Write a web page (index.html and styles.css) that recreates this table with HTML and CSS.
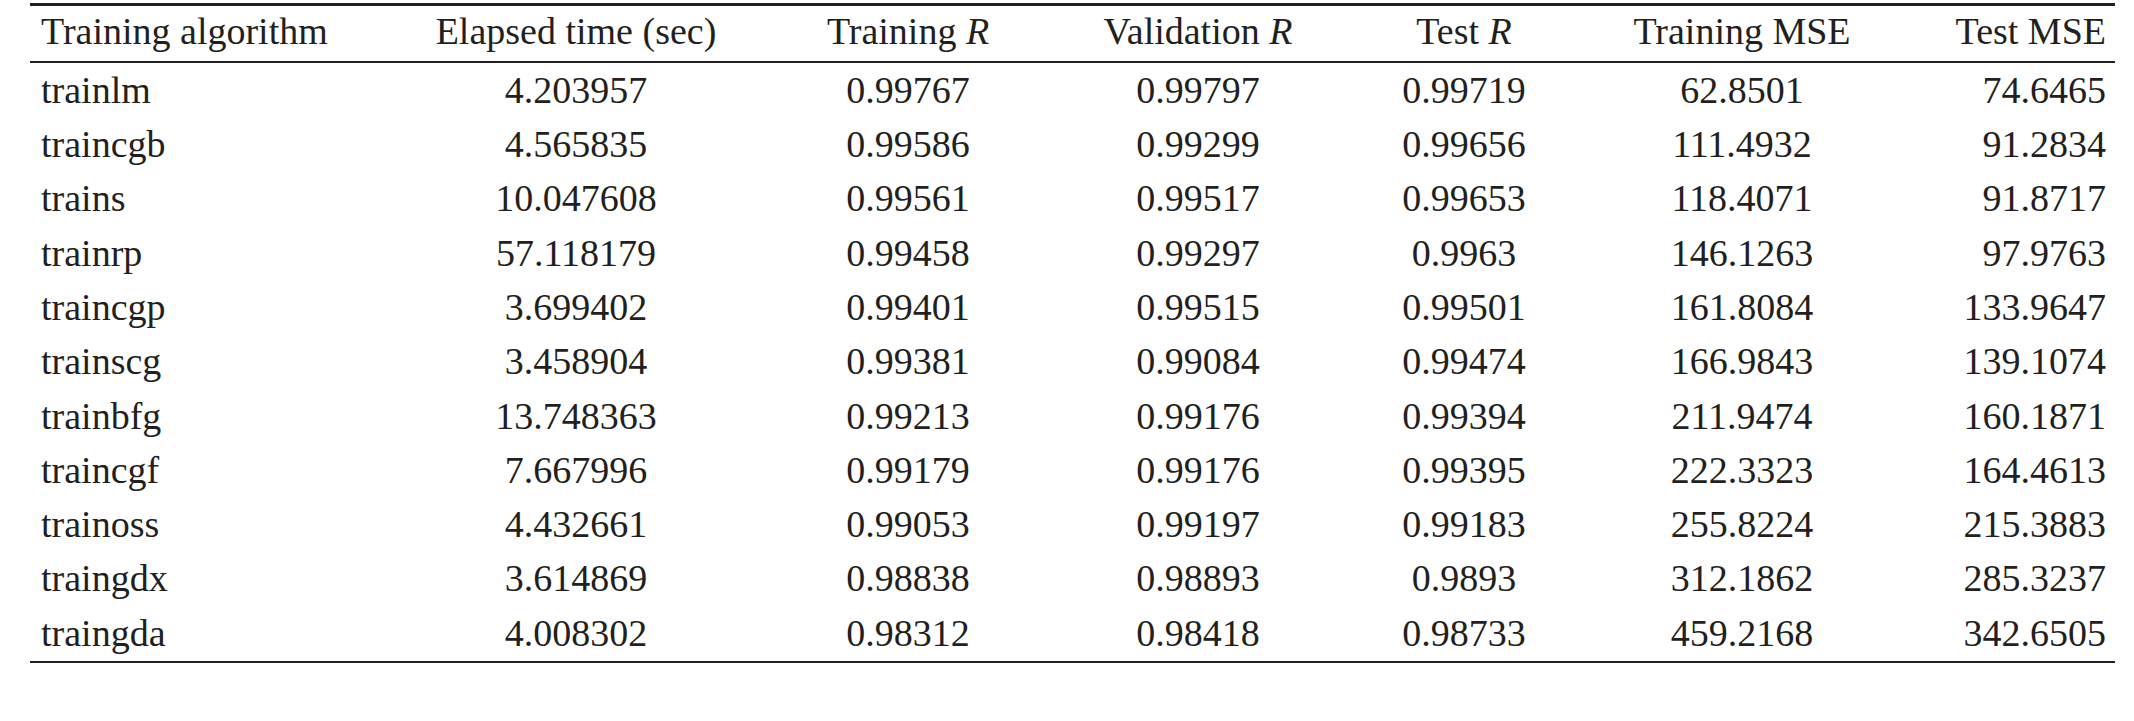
FILE: index.html
```html
<!DOCTYPE html>
<html>
<head>
<meta charset="utf-8">
<link rel="stylesheet" href="styles.css">
</head>
<body>
<table class="results">
  <colgroup>
    <col class="c1"><col class="c2"><col class="c3"><col class="c4"><col class="c5"><col class="c6"><col class="c7">
  </colgroup>
  <thead>
    <tr>
      <th class="left">Training algorithm</th>
      <th>Elapsed time (sec)</th>
      <th>Training <i>R</i></th>
      <th>Validation <i>R</i></th>
      <th>Test <i>R</i></th>
      <th>Training MSE</th>
      <th class="right">Test MSE</th>
    </tr>
  </thead>
  <tbody>
    <tr><td class="left">trainlm</td><td>4.203957</td><td>0.99767</td><td>0.99797</td><td>0.99719</td><td>62.8501</td><td class="right">74.6465</td></tr>
    <tr><td class="left">traincgb</td><td>4.565835</td><td>0.99586</td><td>0.99299</td><td>0.99656</td><td>111.4932</td><td class="right">91.2834</td></tr>
    <tr><td class="left">trains</td><td>10.047608</td><td>0.99561</td><td>0.99517</td><td>0.99653</td><td>118.4071</td><td class="right">91.8717</td></tr>
    <tr><td class="left">trainrp</td><td>57.118179</td><td>0.99458</td><td>0.99297</td><td>0.9963</td><td>146.1263</td><td class="right">97.9763</td></tr>
    <tr><td class="left">traincgp</td><td>3.699402</td><td>0.99401</td><td>0.99515</td><td>0.99501</td><td>161.8084</td><td class="right">133.9647</td></tr>
    <tr><td class="left">trainscg</td><td>3.458904</td><td>0.99381</td><td>0.99084</td><td>0.99474</td><td>166.9843</td><td class="right">139.1074</td></tr>
    <tr><td class="left">trainbfg</td><td>13.748363</td><td>0.99213</td><td>0.99176</td><td>0.99394</td><td>211.9474</td><td class="right">160.1871</td></tr>
    <tr><td class="left">traincgf</td><td>7.667996</td><td>0.99179</td><td>0.99176</td><td>0.99395</td><td>222.3323</td><td class="right">164.4613</td></tr>
    <tr><td class="left">trainoss</td><td>4.432661</td><td>0.99053</td><td>0.99197</td><td>0.99183</td><td>255.8224</td><td class="right">215.3883</td></tr>
    <tr><td class="left">traingdx</td><td>3.614869</td><td>0.98838</td><td>0.98893</td><td>0.9893</td><td>312.1862</td><td class="right">285.3237</td></tr>
    <tr><td class="left">traingda</td><td>4.008302</td><td>0.98312</td><td>0.98418</td><td>0.98733</td><td>459.2168</td><td class="right">342.6505</td></tr>
  </tbody>
</table>
</body>
</html>
```

FILE: styles.css
```css
html, body {
  margin: 0;
  padding: 0;
  background: #ffffff;
}

body {
  padding: 3px 0 0 30px;
  font-family: "Liberation Serif", "Times New Roman", serif;
  color: #231f20;
}

.results {
  width: 2085px;
  table-layout: fixed;
  border-collapse: separate;
  border-spacing: 0;
  font-size: 38px;
  line-height: 38px;
}

.c1 { width: 380px; }
.c2 { width: 332px; }
.c3 { width: 332px; }
.c4 { width: 248px; }
.c5 { width: 284px; }
.c6 { width: 272px; }
.c7 { width: 237px; }

.results th,
.results td {
  text-align: center;
  vertical-align: top;
  font-weight: normal;
  white-space: nowrap;
}

.results thead th {
  border-top: 3px solid #231f20;
  border-bottom: 2px solid #231f20;
  padding: 5.7px 0 11.3px;
}

.results tbody td {
  padding: 7.85px 0 8.45px;
}

.results tbody tr:last-child td {
  padding-bottom: 9.15px;
  border-bottom: 2px solid #231f20;
}

.results th.left,
.results td.left {
  text-align: left;
  padding-left: 11px;
}

.results th.right,
.results td.right {
  text-align: right;
  padding-right: 9px;
}

.results i {
  font-style: italic;
}
```
